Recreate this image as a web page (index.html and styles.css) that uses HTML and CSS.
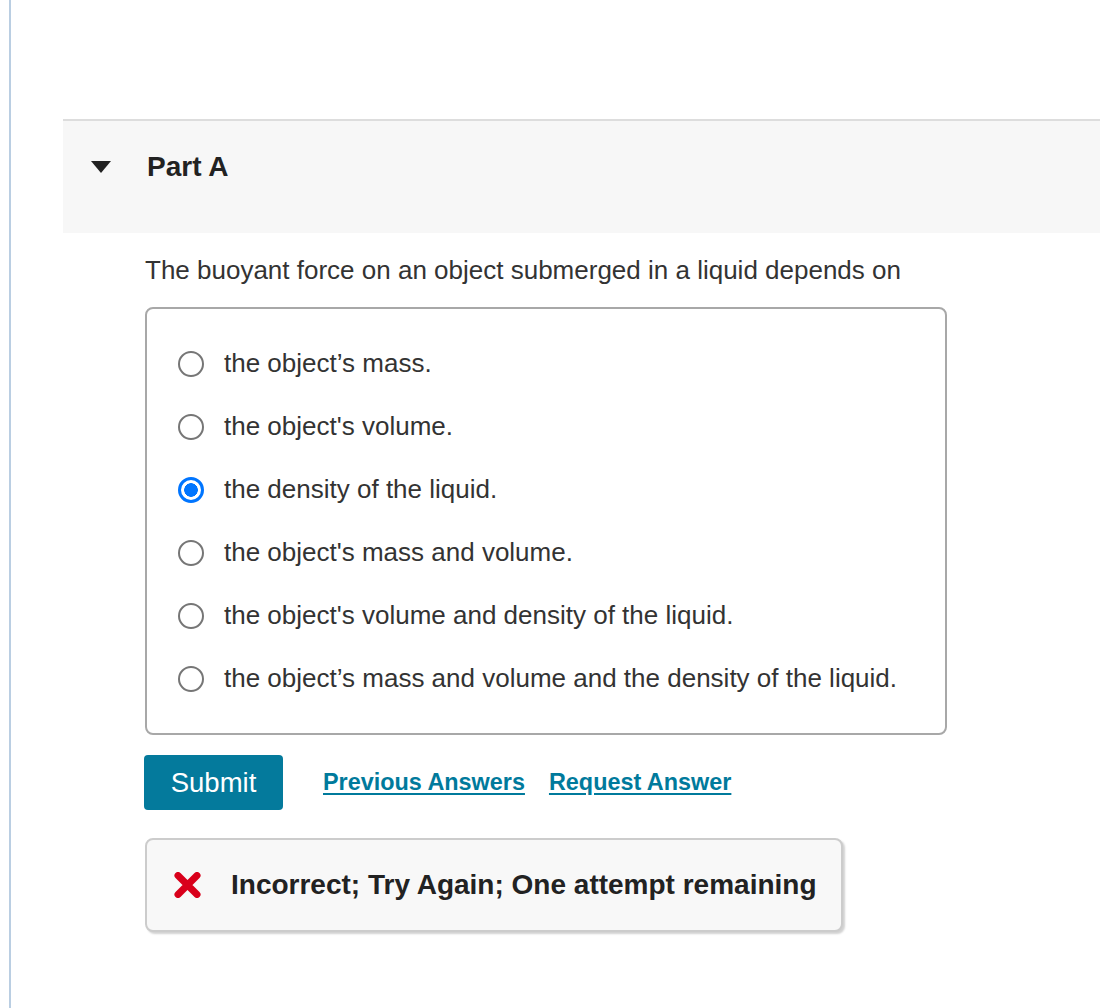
FILE: index.html
```html
<!DOCTYPE html>
<html lang="en">
<head>
<meta charset="utf-8">
<title>Part A</title>
<link rel="stylesheet" href="styles.css">
</head>
<body>
<div class="page">
  <section class="part">
    <div class="part-header">
      <span class="caret"></span>
      <h2 class="part-title">Part A</h2>
    </div>
    <div class="part-body">
      <p class="question">The buoyant force on an object submerged in a liquid depends on</p>
      <div class="options">
        <label class="option"><input type="radio" name="q" class="radio"><span>the object’s mass.</span></label>
        <label class="option"><input type="radio" name="q" class="radio"><span>the object's volume.</span></label>
        <label class="option"><input type="radio" name="q" class="radio" checked><span>the density of the liquid.</span></label>
        <label class="option"><input type="radio" name="q" class="radio"><span>the object's mass and volume.</span></label>
        <label class="option"><input type="radio" name="q" class="radio"><span>the object's volume and density of the liquid.</span></label>
        <label class="option"><input type="radio" name="q" class="radio"><span>the object’s mass and volume and the density of the liquid.</span></label>
      </div>
      <div class="actions">
        <button class="submit" type="button">Submit</button>
        <a class="link" href="#">Previous Answers</a>
        <a class="link" href="#">Request Answer</a>
      </div>
      <div class="feedback">
        <svg class="x-icon" width="27" height="26" viewBox="0 0 27 26" aria-hidden="true">
          <path d="M4 3.5 L23 22.5 M23 3.5 L4 22.5" stroke="#d9001b" stroke-width="7" stroke-linecap="round"/>
        </svg>
        <span class="feedback-text">Incorrect; Try Again; One attempt remaining</span>
      </div>
    </div>
  </section>
</div>
</body>
</html>
```
FILE: styles.css
```css
html, body {
  margin: 0;
  padding: 0;
  background: #fff;
}
body {
  font-family: "Liberation Sans", Arial, sans-serif;
  color: #333;
}
.page {
  margin-left: 9px;
  border-left: 2px solid #bacee2;
  min-height: 1008px;
  box-sizing: border-box;
  padding-top: 119px;
  padding-left: 52px;
}
.part {
  border-top: 2px solid #dddddd;
}
.part-header {
  background: #f7f7f7;
  height: 112px;
  box-sizing: border-box;
  display: flex;
  align-items: flex-start;
  padding-top: 31px;
  padding-left: 28px;
}
.caret {
  width: 0;
  height: 0;
  border-left: 10.5px solid transparent;
  border-right: 10.5px solid transparent;
  border-top: 12px solid #222;
  margin-top: 9px;
}
.part-title {
  margin: 0 0 0 36px;
  font-size: 28px;
  font-weight: bold;
  color: #222;
  line-height: 30px;
}
.part-body {
  padding-left: 82px;
  padding-top: 23px;
}
.question {
  margin: 0 0 22px 0;
  font-size: 26px;
  line-height: 29px;
}
.options {
  width: 802px;
  box-sizing: border-box;
  border: 2px solid #a8a8a8;
  border-radius: 8px;
  padding: 23px 0 23px 31px;
}
.option {
  display: flex;
  align-items: center;
  height: 63px;
  font-size: 26px;
  gap: 20px;
}
.radio {
  appearance: none;
  -webkit-appearance: none;
  margin: 0;
  width: 26px;
  height: 26px;
  border-radius: 50%;
  border: 2px solid #767676;
  box-sizing: border-box;
  background: #fff;
  flex: none;
}
.radio:checked {
  border: 3px solid #0075ff;
  background: radial-gradient(circle, #0075ff 0 6.5px, #fff 7.1px);
}
.actions {
  display: flex;
  align-items: center;
  margin-top: 20px;
  margin-left: -1px;
}
.submit {
  width: 139px;
  height: 55px;
  border: none;
  border-radius: 4px;
  background: #047a9c;
  color: #fff;
  font-family: "Liberation Sans", Arial, sans-serif;
  font-size: 27.5px;
  padding: 0;
  margin-right: 40px;
}
.link {
  color: #007a9c;
  font-weight: bold;
  font-size: 23.4px;
  text-decoration: underline;
  text-underline-offset: 3px;
  margin-right: 24px;
}
.feedback {
  margin-top: 28px;
  width: 698px;
  height: 94px;
  box-sizing: border-box;
  background: #f8f8f8;
  border: 2px solid #cccccc;
  border-radius: 8px;
  box-shadow: 2px 2px 2px rgba(0, 0, 0, 0.18);
  display: flex;
  align-items: center;
  padding-left: 27px;
  gap: 30px;
}
.x-icon {
  flex: none;
}
.feedback-text {
  font-weight: bold;
  font-size: 28px;
  color: #222;
}
```
